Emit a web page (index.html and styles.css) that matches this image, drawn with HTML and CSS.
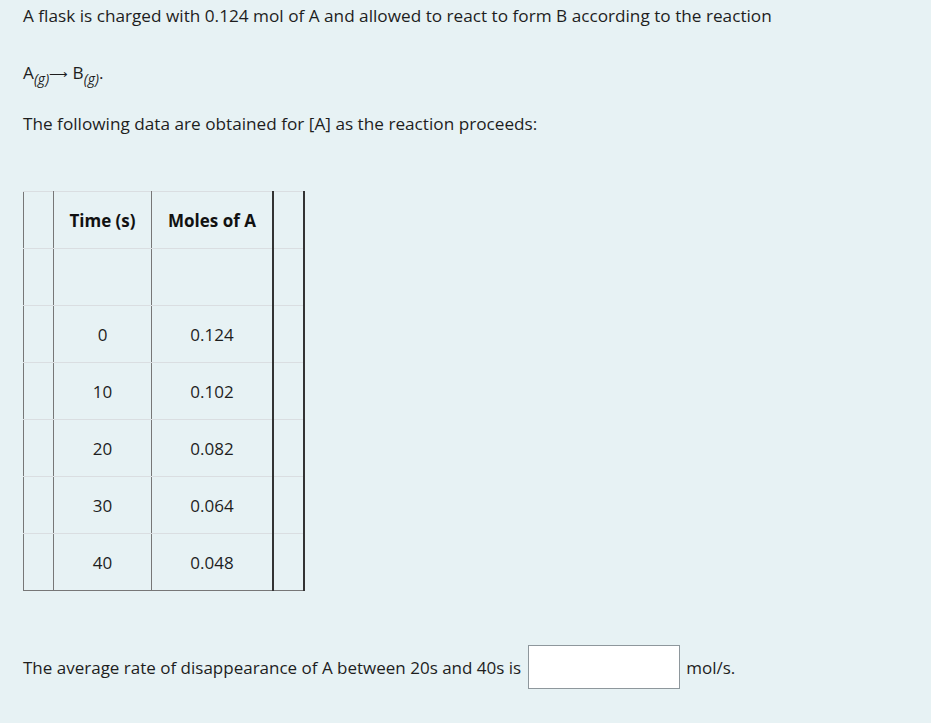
FILE: index.html
```html
<!DOCTYPE html>
<html>
<head>
<meta charset="utf-8">
<link rel="stylesheet" href="styles.css">
</head>
<body>
<div class="page">
  <p class="line l1">A flask is charged with 0.124 mol of A and allowed to react to form B according to the reaction</p>
  <p class="line l2">A<sub>(g)</sub><span class="arrow">&#x27F6;</span> B<sub>(g)</sub>.</p>
  <p class="line l3">The following data are obtained for [A] as the reaction proceeds:</p>
  <table class="data">
    <tr class="head">
      <td class="edge"></td>
      <th class="c-time">Time (s)</th>
      <th class="c-moles">Moles of A</th>
      <td class="edge end"></td>
    </tr>
    <tr>
      <td class="edge"></td><td class="c-time"></td><td class="c-moles"></td><td class="edge end"></td>
    </tr>
    <tr>
      <td class="edge"></td><td class="c-time">0</td><td class="c-moles">0.124</td><td class="edge end"></td>
    </tr>
    <tr>
      <td class="edge"></td><td class="c-time">10</td><td class="c-moles">0.102</td><td class="edge end"></td>
    </tr>
    <tr>
      <td class="edge"></td><td class="c-time">20</td><td class="c-moles">0.082</td><td class="edge end"></td>
    </tr>
    <tr>
      <td class="edge"></td><td class="c-time">30</td><td class="c-moles">0.064</td><td class="edge end"></td>
    </tr>
    <tr>
      <td class="edge"></td><td class="c-time">40</td><td class="c-moles">0.048</td><td class="edge end"></td>
    </tr>
  </table>
  <div class="answer">
    <span>The average rate of disappearance of A between 20s and 40s is</span>
    <input class="box" type="text">
    <span class="unit">mol/s.</span>
  </div>
</div>
</body>
</html>
```
FILE: styles.css
```css
html, body {
  margin: 0;
  padding: 0;
  background: #e7f2f4;
}
.page {
  padding: 4px 23px 0 23px;
  font-family: "Open Sans", "Noto Sans", sans-serif;
  font-size: 17.2px;
  color: #1e1e1e;
}
.line {
  margin: 0;
  line-height: 24px;
  height: 24px;
  white-space: nowrap;
}
.l1 { margin-bottom: 33px; }
.l2 { margin-bottom: 27px; }
.l2 sub {
  font-style: italic;
  font-size: 14px;
  vertical-align: -5px;
  line-height: 0;
}
.arrow {
  font-size: 12.5px;
}
.data {
  margin-top: 55px;
  border-collapse: collapse;
  border-top: 1px solid #dadee1;
  border-bottom: 1px solid #777;
}
.data td, .data th {
  border-top: 1px solid #dadee1;
  border-bottom: 1px solid #dadee1;
  border-left: 1px solid #777;
  border-right: 1px solid #777;
  height: 56px;
  padding: 0;
  text-align: center;
  font-size: 17px;
  font-weight: 400;
}
.data tr:last-child td { border-bottom: 1px solid #777; }
.data .head th { font-weight: 700; color: #111; }
.edge { width: 29px; }
.c-time { width: 97px; }
.c-moles { width: 120px; border-right: 2px solid #333 !important; }
.end { border-right: 2px solid #333 !important; }
.answer {
  margin-top: 54px;
  display: flex;
  align-items: center;
  white-space: nowrap;
  font-size: 17px;
}
.box {
  width: 152px;
  height: 44px;
  box-sizing: border-box;
  border: 1px solid #8e979c;
  background: #fff;
  margin: 0 0 0 7px;
  padding: 0;
}
.unit { margin-left: 6px; }
```
